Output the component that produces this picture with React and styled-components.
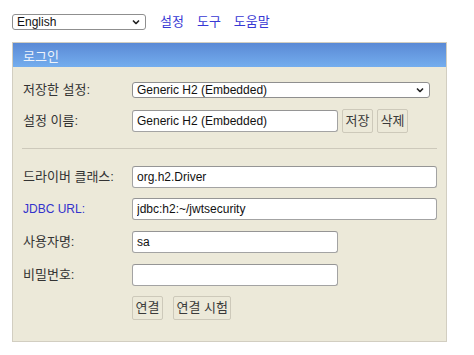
import React from "react";
import styled, { createGlobalStyle } from "styled-components";

const Global = createGlobalStyle`
  html, body { margin: 0; padding: 0; background: #ffffff; }
  body {
    font-family: "Liberation Sans", Arial, "Noto Sans CJK KR", sans-serif;
    font-size: 12px;
    color: #333333;
  }
`;

const Page = styled.div`
  padding: 14px 0 0 12px;
`;

const TopBar = styled.div`
  display: flex;
  align-items: center;
  height: 16px;
  gap: 14px;
`;

const Links = styled.div`
  display: flex;
  gap: 13px;
  line-height: 16px;
`;

const NavLink = styled.a`
  color: #3838d4;
  text-decoration: none;
  font-size: 13px;
`;

const SelectWrap = styled.div`
  position: relative;
  width: ${(p) => p.$w}px;
  height: ${(p) => p.$h}px;
`;

const Select = styled.select`
  appearance: none;
  -webkit-appearance: none;
  box-sizing: border-box;
  width: 100%;
  height: 100%;
  margin: 0;
  padding: 0 0 0 4px;
  border: 1px solid #8f8f8f;
  border-radius: 3px;
  background: #ffffff;
  font-family: "Liberation Sans", Arial, sans-serif;
  font-size: 12px;
  line-height: 14px;
  color: #111111;
  outline: none;
`;

const Chevron = styled.svg`
  position: absolute;
  right: 6px;
  top: 50%;
  transform: translateY(-50%);
  pointer-events: none;
`;

const Panel = styled.div`
  margin-top: 12px;
  width: 435px;
  box-sizing: border-box;
  border: 1px solid #d2cec1;
  background: #ece9d9;
`;

const Header = styled.div`
  height: 24px;
  display: flex;
  align-items: center;
  padding-left: 10px;
  color: #eef3fb;
  font-size: 13px;
  background: linear-gradient(#5a89d5, #74adee);
`;

const Body = styled.div`
  padding: 15px 9px 21px 10px;
`;

const Row = styled.div`
  display: grid;
  grid-template-columns: 109px 1fr;
  align-items: center;
  height: ${(p) => p.$h}px;
  margin-top: ${(p) => p.$mt || 0}px;
`;

const Label = styled.label`
  color: ${(p) => (p.$link ? "#3333cc" : "#333333")};
  font-size: ${(p) => (p.$link ? "12px" : "13px")};
  line-height: 14px;
  white-space: nowrap;
`;

const Controls = styled.div`
  display: flex;
  align-items: center;
  gap: ${(p) => p.$gap || 4}px;
`;

const Input = styled.input`
  box-sizing: border-box;
  width: ${(p) => (p.$w ? `${p.$w}px` : "100%")};
  height: 22px;
  margin: 0;
  padding: 0 4px;
  border: 1px solid #a3a3a3;
  border-top-color: #959595;
  border-radius: 3px;
  background: #ffffff;
  font-family: "Liberation Sans", Arial, sans-serif;
  font-size: 12px;
  color: #111111;
  outline: none;
`;

const Button = styled.button`
  box-sizing: border-box;
  height: 24px;
  margin: 0;
  padding: 0 2.5px;
  border: 1px solid #cdc9ba;
  border-radius: 2px;
  background: #ece9d9;
  color: #3a3a3a;
  font-family: "Liberation Sans", "Noto Sans CJK KR", sans-serif;
  font-size: 13px;
  line-height: 14px;
`;

const Divider = styled.div`
  margin: 15px 0 17px -1px;
  height: 1px;
  background: #cdc9bb;
`;

const ChevronIcon = () => (
  <Chevron width="8" height="5" viewBox="0 0 8 5">
    <path d="M1 1 L4 4 L7 1" fill="none" stroke="#222" strokeWidth="1.6" />
  </Chevron>
);

export default function App() {
  return (
    <>
      <Global />
      <Page>
        <TopBar>
          <SelectWrap $w={134} $h={16}>
            <Select defaultValue="en">
              <option value="en">English</option>
            </Select>
            <ChevronIcon />
          </SelectWrap>
          <Links>
            <NavLink href="#">설정</NavLink>
            <NavLink href="#">도구</NavLink>
            <NavLink href="#">도움말</NavLink>
          </Links>
        </TopBar>
        <Panel>
          <Header>로그인</Header>
          <Body>
            <Row $h={16}>
              <Label>저장한 설정:</Label>
              <SelectWrap $w={298} $h={16}>
                <Select defaultValue="h2">
                  <option value="h2">Generic H2 (Embedded)</option>
                </Select>
                <ChevronIcon />
              </SelectWrap>
            </Row>
            <Row $h={24} $mt={11}>
              <Label>설정 이름:</Label>
              <Controls>
                <Input $w={206} defaultValue="Generic H2 (Embedded)" />
                <Button>저장</Button>
                <Button>삭제</Button>
              </Controls>
            </Row>
            <Divider />
            <Row $h={22}>
              <Label>드라이버 클래스:</Label>
              <Input defaultValue="org.h2.Driver" />
            </Row>
            <Row $h={22} $mt={10}>
              <Label $link>JDBC URL:</Label>
              <Input defaultValue="jdbc:h2:~/jwtsecurity" />
            </Row>
            <Row $h={22} $mt={11}>
              <Label>사용자명:</Label>
              <Input $w={206} defaultValue="sa" />
            </Row>
            <Row $h={22} $mt={11}>
              <Label>비밀번호:</Label>
              <Input $w={206} type="password" defaultValue="" />
            </Row>
            <Row $h={24} $mt={10}>
              <span />
              <Controls $gap={10}>
                <Button>연결</Button>
                <Button>연결 시험</Button>
              </Controls>
            </Row>
          </Body>
        </Panel>
      </Page>
    </>
  );
}
